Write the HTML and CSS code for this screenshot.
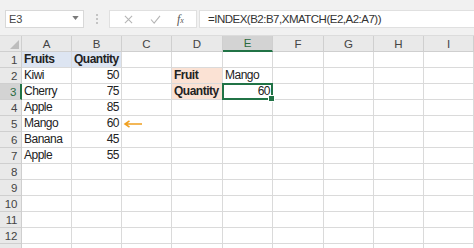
FILE: index.html
```html
<!DOCTYPE html>
<html lang="en">
<head>
    <meta charset="UTF-8">
    <title>INDEX XMATCH</title>
    <link rel="stylesheet" href="styles.css">
</head>
<body>
    <div class="toolbar">
        <div class="name-box">
            <span>E3</span>
            <svg class="caret" viewBox="0 0 8 5" width="7" height="4"><path d="M0 0h8L4 5z" fill="#7a7a7a"/></svg>
        </div>
        <div class="grip"><i></i><i></i><i></i></div>
        <div class="fx-buttons">
            <svg viewBox="0 0 10 10" width="9" height="9"><path d="M1 1l8 8M9 1l-8 8" stroke="#b5b5b5" stroke-width="1.2"/></svg>
            <svg viewBox="0 0 12 10" width="11" height="9"><path d="M1 5l3.5 4L11 1" stroke="#b5b5b5" stroke-width="1.2" fill="none"/></svg>
            <span class="fx">f<sub>x</sub></span>
        </div>
        <div class="formula">=INDEX(B2:B7,XMATCH(E2,A2:A7))</div>
    </div>

    <div class="sheet">
        <div class="corner"><svg viewBox="0 0 10 10" width="9" height="9"><path d="M10 0v10H0z" fill="#bdbdbd"/></svg></div>
        <div class="col-head">A</div>
        <div class="col-head">B</div>
        <div class="col-head">C</div>
        <div class="col-head">D</div>
        <div class="col-head active">E</div>
        <div class="col-head">F</div>
        <div class="col-head">G</div>
        <div class="col-head">H</div>
        <div class="col-head">I</div>

        <div class="row-head">1</div>
        <div class="cell head-blue">Fruits</div>
        <div class="cell head-blue">Quantity</div>
        <div class="cell"></div><div class="cell"></div><div class="cell"></div><div class="cell"></div><div class="cell"></div><div class="cell"></div><div class="cell"></div>

        <div class="row-head">2</div>
        <div class="cell">Kiwi</div>
        <div class="cell num">50</div>
        <div class="cell"></div>
        <div class="cell label">Fruit</div>
        <div class="cell">Mango</div>
        <div class="cell"></div><div class="cell"></div><div class="cell"></div><div class="cell"></div>

        <div class="row-head active">3</div>
        <div class="cell">Cherry</div>
        <div class="cell num">75</div>
        <div class="cell"></div>
        <div class="cell label">Quantity</div>
        <div class="cell num selected">60</div>
        <div class="cell"></div><div class="cell"></div><div class="cell"></div><div class="cell"></div>

        <div class="row-head">4</div>
        <div class="cell">Apple</div>
        <div class="cell num">85</div>
        <div class="cell"></div><div class="cell"></div><div class="cell"></div><div class="cell"></div><div class="cell"></div><div class="cell"></div><div class="cell"></div>

        <div class="row-head">5</div>
        <div class="cell">Mango</div>
        <div class="cell num">60</div>
        <div class="cell pointer">
            <svg class="arrow" viewBox="0 0 20 8" width="20" height="8"><path d="M19 4H3M6.5 0.8L2 4l4.5 3.2" stroke="#f0a020" stroke-width="1.6" fill="none"/></svg>
        </div>
        <div class="cell"></div><div class="cell"></div><div class="cell"></div><div class="cell"></div><div class="cell"></div><div class="cell"></div>

        <div class="row-head">6</div>
        <div class="cell">Banana</div>
        <div class="cell num">45</div>
        <div class="cell"></div><div class="cell"></div><div class="cell"></div><div class="cell"></div><div class="cell"></div><div class="cell"></div><div class="cell"></div>

        <div class="row-head">7</div>
        <div class="cell">Apple</div>
        <div class="cell num">55</div>
        <div class="cell"></div><div class="cell"></div><div class="cell"></div><div class="cell"></div><div class="cell"></div><div class="cell"></div><div class="cell"></div>

        <div class="row-head">8</div>
        <div class="cell"></div><div class="cell"></div><div class="cell"></div><div class="cell"></div><div class="cell"></div><div class="cell"></div><div class="cell"></div><div class="cell"></div><div class="cell"></div>
        <div class="row-head">9</div>
        <div class="cell"></div><div class="cell"></div><div class="cell"></div><div class="cell"></div><div class="cell"></div><div class="cell"></div><div class="cell"></div><div class="cell"></div><div class="cell"></div>
        <div class="row-head">10</div>
        <div class="cell"></div><div class="cell"></div><div class="cell"></div><div class="cell"></div><div class="cell"></div><div class="cell"></div><div class="cell"></div><div class="cell"></div><div class="cell"></div>
        <div class="row-head">11</div>
        <div class="cell"></div><div class="cell"></div><div class="cell"></div><div class="cell"></div><div class="cell"></div><div class="cell"></div><div class="cell"></div><div class="cell"></div><div class="cell"></div>
        <div class="row-head">12</div>
        <div class="cell"></div><div class="cell"></div><div class="cell"></div><div class="cell"></div><div class="cell"></div><div class="cell"></div><div class="cell"></div><div class="cell"></div><div class="cell"></div>
        <div class="row-head">13</div>
        <div class="cell"></div><div class="cell"></div><div class="cell"></div><div class="cell"></div><div class="cell"></div><div class="cell"></div><div class="cell"></div><div class="cell"></div><div class="cell"></div>
    </div>
</body>
</html>
```

FILE: styles.css
```css
* {
    box-sizing: border-box;
}
body {
    margin: 0;
    width: 474px;
    height: 248px;
    overflow: hidden;
    background-color: #fff;
    font-family: "Liberation Sans", Arial, sans-serif;
    font-size: 11px;
    color: #222;
}
/* 顶部编辑栏 */
.toolbar {
    height: 36px;
    background-color: #f1f1f1;
    border-bottom: 1px solid #dcdcdc;
    display: flex;
    align-items: flex-start;
    padding-top: 10px;
}
.name-box {
    margin-left: 5px;
    width: 79px;
    height: 18px;
    background-color: #fff;
    border: 1px solid #d8d8d8;
    display: flex;
    align-items: center;
    justify-content: space-between;
    padding: 0 4px 0 3px;
    color: #444;
    font-size: 11px;
}
.caret {
    margin-bottom: 2px;
}
.grip {
    width: 25px;
    height: 18px;
    display: flex;
    flex-direction: column;
    align-items: center;
    justify-content: center;
    gap: 2px;
}
.grip i {
    display: block;
    width: 2px;
    height: 2px;
    background-color: #c4c4c4;
}
.fx-buttons {
    width: 88px;
    height: 18px;
    background-color: #fff;
    border: 1px solid #e0e0e0;
    display: flex;
    align-items: center;
    justify-content: space-around;
    padding: 0 4px 0 6px;
}
.fx {
    font-family: "Liberation Serif", serif;
    font-style: italic;
    font-size: 12px;
    color: #555;
    line-height: 1;
}
.fx sub {
    font-size: 8px;
    vertical-align: 0;
}
.formula {
    flex: 1;
    margin-left: 2px;
    height: 18px;
    background-color: #fff;
    border: 1px solid #e0e0e0;
    border-right: none;
    padding-left: 8px;
    line-height: 16px;
    font-size: 11.5px;
    letter-spacing: -0.5px;
    color: #333;
}
/* 表格 */
.sheet {
    display: grid;
    grid-template-columns: 22px 50px 50px 50px 51px 50px 51px 50px 50px 50px;
    grid-auto-rows: 16px;
}
.corner,
.col-head,
.row-head {
    background-color: #e9e9e9;
    color: #444;
    border-right: 1px solid #cfcfcf;
    border-bottom: 1px solid #cfcfcf;
    display: flex;
    align-items: center;
    justify-content: center;
}
.corner {
    justify-content: flex-end;
    align-items: flex-end;
    padding: 0 2px 2px 0;
}
.col-head {
    font-size: 11.5px;
}
.col-head.active {
    background-color: #d3d3d3;
    color: #2a6b3f;
    border-bottom: 2px solid #217346;
}
.row-head {
    justify-content: flex-end;
    padding-right: 4px;
    font-size: 11.5px;
    letter-spacing: -0.3px;
}
.row-head.active {
    background-color: #d3d3d3;
    color: #2a6b3f;
    border-right: 2px solid #217346;
}
.cell {
    position: relative;
    border-right: 1px solid #dadada;
    border-bottom: 1px solid #dadada;
    padding: 0 2px 0 2px;
    line-height: 15px;
    white-space: nowrap;
    font-size: 12px;
    letter-spacing: -0.5px;
    color: #222;
}
.num {
    text-align: right;
}
.head-blue {
    background-color: #dde5f2;
    font-weight: bold;
}
.label {
    background-color: #fbe2d4;
    font-weight: bold;
}
.selected::after {
    content: "";
    position: absolute;
    top: -1px;
    left: -1px;
    right: -1px;
    bottom: -1px;
    border: 2px solid #217346;
}
.selected::before {
    content: "";
    position: absolute;
    right: -3px;
    bottom: -3px;
    width: 5px;
    height: 5px;
    background-color: #217346;
    border: 1px solid #fff;
    z-index: 1;
}
.arrow {
    position: absolute;
    left: 1px;
    top: 4px;
}
```
